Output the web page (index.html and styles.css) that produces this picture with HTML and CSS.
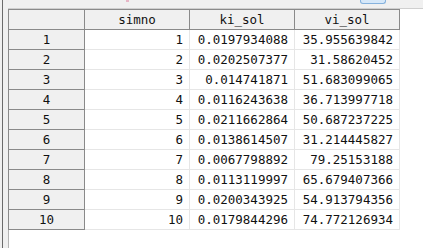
FILE: index.html
```html
<!DOCTYPE html>
<html>
<head>
<meta charset="utf-8">
<link rel="stylesheet" href="styles.css">
</head>
<body>
<div class="window">
  <div class="side"></div>
  <div class="content">
    <div class="toolbar"><span class="mark"></span><span class="btn"></span></div>
    <div class="grid">
      <table class="sheet">
        <colgroup><col class="c-row"><col class="c-data"><col class="c-data"><col class="c-data"></colgroup>
        <thead>
          <tr><th></th><th>simno</th><th>ki_sol</th><th>vi_sol</th></tr>
        </thead>
        <tbody>
          <tr><th>1</th><td>1</td><td>0.0197934088</td><td>35.955639842</td></tr>
          <tr><th>2</th><td>2</td><td>0.0202507377</td><td>31.58620452</td></tr>
          <tr><th>3</th><td>3</td><td>0.014741871</td><td>51.683099065</td></tr>
          <tr><th>4</th><td>4</td><td>0.0116243638</td><td>36.713997718</td></tr>
          <tr><th>5</th><td>5</td><td>0.0211662864</td><td>50.687237225</td></tr>
          <tr><th>6</th><td>6</td><td>0.0138614507</td><td>31.214445827</td></tr>
          <tr><th>7</th><td>7</td><td>0.0067798892</td><td>79.25153188</td></tr>
          <tr><th>8</th><td>8</td><td>0.0113119997</td><td>65.679407366</td></tr>
          <tr><th>9</th><td>9</td><td>0.0200343925</td><td>54.913794356</td></tr>
          <tr><th>10</th><td>10</td><td>0.0179844296</td><td>74.772126934</td></tr>
        </tbody>
      </table>
    </div>
  </div>
</div>
</body>
</html>
```
FILE: styles.css
```css
html, body {
  margin: 0;
  padding: 0;
  background: #f0f0f0;
}
.window {
  display: flex;
  height: 248px;
  width: 423px;
  overflow: hidden;
}
.side {
  margin-left: 2px;
  border-left: 1px solid #6b6b6b;
  width: 5px;
  background: #f0f0f0;
}
.content {
  flex: 1;
  display: flex;
  flex-direction: column;
}
.toolbar {
  height: 8px;
  border-bottom: 1px solid #cfcfcf;
  display: flex;
  align-items: flex-start;
  background: #f0f0f0;
}
.mark {
  margin-left: 118px;
  width: 3px;
  height: 2px;
  background: #e7b6c6;
}
.btn {
  margin-left: 231px;
  width: 24px;
  height: 3px;
  background: #d6e8f9;
  border: 1px solid #86b2dd;
  border-top: none;
  border-radius: 0 0 3px 3px;
}
.grid {
  flex: 1;
  background: #fff;
  box-shadow: inset 1px 0 #b4b4b4;
}
.sheet {
  border-collapse: collapse;
  table-layout: fixed;
  width: 392px;
  font-family: "DejaVu Sans Mono", "Liberation Mono", monospace;
  font-size: 12.5px;
  color: #111;
}
.c-row { width: 76px; }
.c-data { width: 105px; }
.sheet tr {
  height: 20px;
}
.sheet th {
  background: #f0f0f0;
  border: 1px solid #8a8a8a;
  font-weight: normal;
  text-align: center;
  padding: 0;
  line-height: 18px;
}
.sheet td {
  border: 1px solid #e6e6e6;
  text-align: right;
  padding: 0 6px 0 0;
  line-height: 18px;
  white-space: nowrap;
}
```
